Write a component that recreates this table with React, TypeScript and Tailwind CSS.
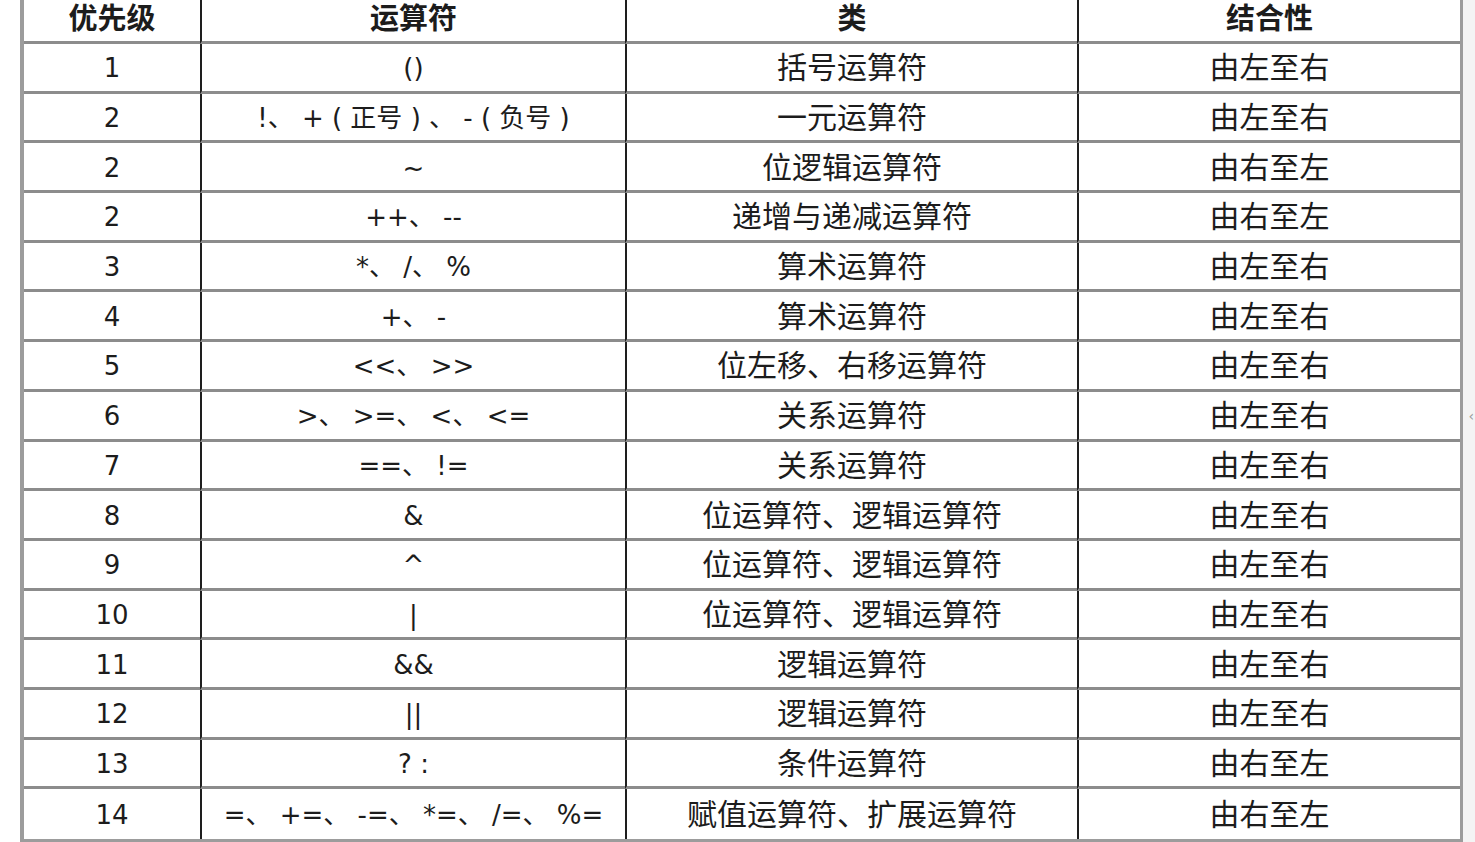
const rows: [string, string, string, string][] = [
  ["1", "()", "括号运算符", "由左至右"],
  ["2", "!、 + ( 正号 ) 、 - ( 负号 )", "一元运算符", "由左至右"],
  ["2", "~", "位逻辑运算符", "由右至左"],
  ["2", "++、 --", "递增与递减运算符", "由右至左"],
  ["3", "*、 /、 %", "算术运算符", "由左至右"],
  ["4", "+、 -", "算术运算符", "由左至右"],
  ["5", "<<、 >>", "位左移、右移运算符", "由左至右"],
  ["6", ">、 >=、 <、 <=", "关系运算符", "由左至右"],
  ["7", "==、 !=", "关系运算符", "由左至右"],
  ["8", "&", "位运算符、逻辑运算符", "由左至右"],
  ["9", "^", "位运算符、逻辑运算符", "由左至右"],
  ["10", "|", "位运算符、逻辑运算符", "由左至右"],
  ["11", "&&", "逻辑运算符", "由左至右"],
  ["12", "||", "逻辑运算符", "由左至右"],
  ["13", "? :", "条件运算符", "由右至左"],
  ["14", "=、 +=、 -=、 *=、 /=、 %=", "赋值运算符、扩展运算符", "由右至左"],
];

const font = "font-['DejaVu_Sans','Noto_Sans_CJK_SC',sans-serif]";

function App() {
  return (
    <div className={`w-[1475px] h-[842px] bg-white flex overflow-hidden ${font} text-[#1c1c1c]`}>
      <div className="w-[20px]" />
      <div className="w-[1443px] h-[842px] border-l-[4px] border-r-[3px] border-b-[3px] border-[#9c9c9c] grid grid-cols-[176px_425px_452px_1fr] grid-rows-[44px_repeat(16,minmax(0,1fr))]">
        {/* header */}
        {["优先级", "运算符", "类", "结合性"].map((h, i) => (
          <div
            key={h}
            className={`flex items-start justify-center border-b-[3px] border-[#8c8c8c] text-[29px] leading-[38px] font-bold ${i > 0 ? "border-l-2 border-l-[#1e1e1e]" : ""}`}
          >
            {h}
          </div>
        ))}
        {rows.map((r, ri) =>
          r.map((c, ci) => (
            <div
              key={`${ri}-${ci}`}
              className={`flex items-center justify-center whitespace-pre pt-[2px] leading-[36px] ${ri < rows.length - 1 ? "border-b-[3px] border-[#8c8c8c]" : ""} ${ci > 0 ? "border-l-2 border-l-[#1e1e1e]" : ""} ${ci >= 2 ? "text-[30px]" : "text-[26px]"}`}
            >
              {c}
            </div>
          )),
        )}
      </div>
      <div className="flex-1 bg-[#f4f4f4] flex items-center justify-end pr-[1px]">
        <span className="text-[#9a9a9a] text-[14px] leading-none mt-[-10px]">‹</span>
      </div>
    </div>
  );
}

export default App;
